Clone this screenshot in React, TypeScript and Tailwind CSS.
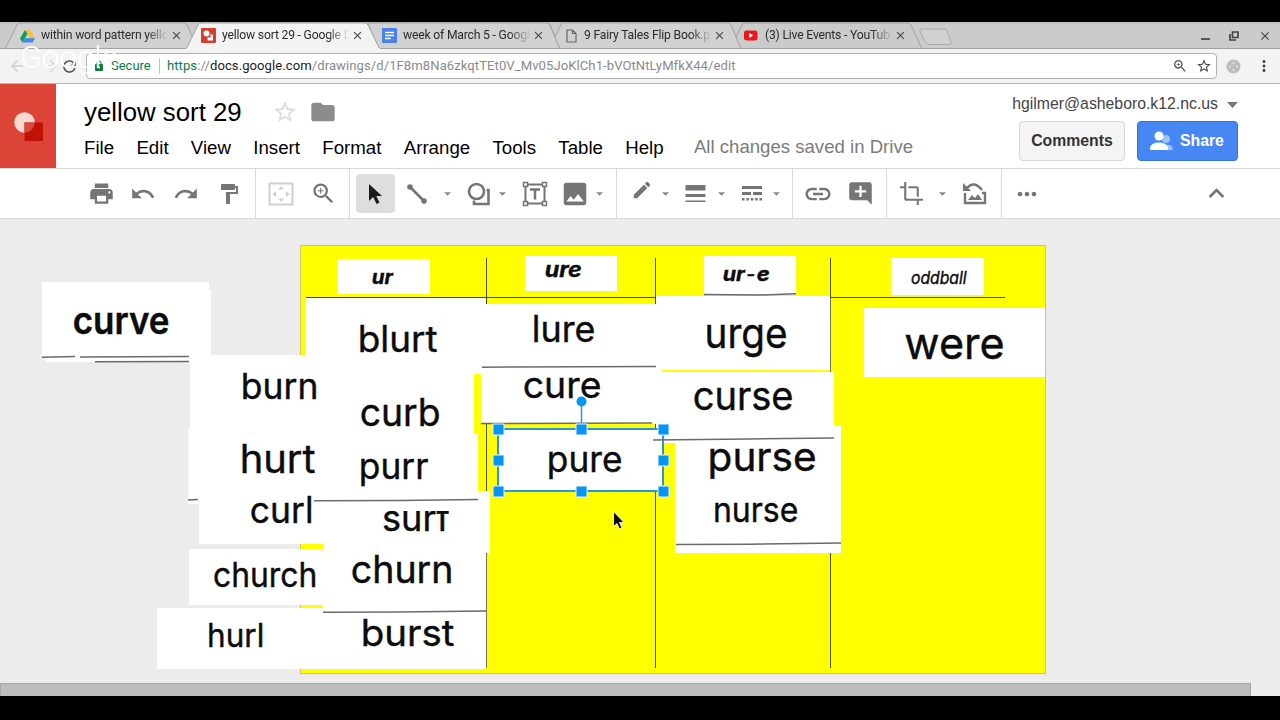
import type { ReactNode } from "react";
import {
  MdPrint,
  MdUndo,
  MdRedo,
  MdFormatPaint,
  MdZoomIn,
  MdEdit,
  MdLink,
  MdAddComment,
  MdCrop,
  MdMoreHoriz,
  MdKeyboardArrowUp,
  MdStarBorder,
  MdFolder,
  MdImage,
  MdRefresh,
  MdArrowBack,
  MdArrowForward,
  MdLock,
  MdMoreVert,
  MdClose,
} from "react-icons/md";

interface Word {
  text: string;
  x: number;
  y: number;
  w: number;
  size: number;
  weight?: number;
  italic?: boolean;
}

const menus = ["File", "Edit", "View", "Insert", "Format", "Arrange", "Tools", "Table", "Help"];

// x and w are the visible ends of the word, y is its baseline
const words: Word[] = [
  { text: "ur", x: 373, y: 283.5, w: 19, size: 20, weight: 700, italic: true },
  { text: "ure", x: 546, y: 276.5, w: 35, size: 21, weight: 700, italic: true },
  { text: "ur", x: 724, y: 281, w: 20, size: 20, weight: 700, italic: true },
  { text: "-", x: 747.5, y: 281, w: 7, size: 19, weight: 500, italic: true },
  { text: "e", x: 758, y: 281, w: 11, size: 20, weight: 700, italic: true },
  { text: "oddball", x: 912, y: 284, w: 54, size: 17.5, weight: 400, italic: true },
  { text: "curve", x: 75, y: 333.5, w: 93, size: 38, weight: 600 },
  { text: "blurt", x: 360, y: 352, w: 76, size: 37 },
  { text: "burn", x: 243, y: 398.5, w: 74, size: 36 },
  { text: "curb", x: 362, y: 425.5, w: 77, size: 38 },
  { text: "hurt", x: 242, y: 472.5, w: 72, size: 39 },
  { text: "purr", x: 361, y: 479, w: 66, size: 36 },
  { text: "curl", x: 252, y: 523, w: 60, size: 37 },
  { text: "church", x: 215, y: 587, w: 101, size: 34 },
  { text: "churn", x: 353, y: 583, w: 99, size: 38 },
  { text: "hurl", x: 209, y: 646.5, w: 54, size: 33 },
  { text: "burst", x: 363, y: 646, w: 90, size: 37 },
  { text: "lure", x: 534, y: 342, w: 60, size: 37 },
  { text: "cure", x: 525, y: 397.5, w: 75, size: 37 },
  { text: "pure", x: 549, y: 471.5, w: 72, size: 36 },
  { text: "urge", x: 707, y: 347.5, w: 79, size: 42 },
  { text: "curse", x: 695, y: 409.5, w: 97, size: 39 },
  { text: "purse", x: 710, y: 470.5, w: 105, size: 40 },
  { text: "nurse", x: 715, y: 522, w: 82, size: 35 },
  { text: "were", x: 907, y: 359, w: 96, size: 44 },
];

// x, y, width, height
const cards: number[][] = [
  [337, 259, 93, 35],
  [525, 256, 92, 35],
  [704, 256, 92, 39],
  [891, 258, 93, 37],
  [42, 282, 167, 75],
  [200, 290, 11, 70],
  [45, 356, 150, 6],
  [190, 355, 120, 80],
  [188.5, 430, 136, 74],
  [199, 500, 124, 44],
  [189, 549, 134, 56],
  [157, 608, 170, 61],
  [306, 298, 181, 76],
  [306, 370, 168, 66],
  [310, 434, 168, 60],
  [323, 491, 167, 62],
  [323, 552, 163, 60],
  [320, 608, 166, 61],
  [487, 304, 169, 64],
  [481, 366, 177, 58],
  [656, 296, 174, 74],
  [656, 369, 6, 8],
  [656, 372, 178, 71],
  [675, 426, 166, 127],
  [864, 308, 181, 69],
];

const penLines = [
  "M42 357.2L75 356.6M80 357L189 356.6M95 361.8L189 361.6",
  "M188 500L198 499.6M314 500.8L400 500.6L478 499.4",
  "M323 612.3L400 612L486 611",
  "M482 367.2L656 366.4",
  "M481 423.6L652 423",
  "M653 440L750 439L834 438",
  "M676 544.6L750 544.2L841 543",
  "M704 294.6L760 295L796 293.8",
];

const handles = [
  [498, 429], [581, 429], [663, 429],
  [498, 460], [663, 460],
  [498, 491], [581, 491], [663, 491],
];

const Caret = () => (
  <svg className="h-1 w-[7px] shrink-0" viewBox="0 0 8 4">
    <path d="M0 0h8L4 4z" fill="#8a8a8a" />
  </svg>
);

const Slot = ({ className, children }: { className: string; children: ReactNode }) => (
  <div className={`flex h-full shrink-0 items-center justify-center ${className}`}>{children}</div>
);

const Group = ({ className, children }: { className: string; children: ReactNode }) => (
  <div className={`flex h-full shrink-0 border-r border-[#d9d9d9] ${className}`}>{children}</div>
);

const Tab = ({ icon, title }: { icon: ReactNode; title: string }) => (
  <div className="relative flex w-[181px] shrink-0 items-center pl-5">
    <div className="flex w-[21px] shrink-0">{icon}</div>
    <span className="w-[126px] whitespace-nowrap text-[12.2px] tracking-[-0.2px] text-[#2b2b2b] [mask-image:linear-gradient(to_right,black_84%,transparent_101%)]">
      {title}
    </span>
    <MdClose className="ml-[3px] size-[13px] shrink-0 text-[#444]" />
  </div>
);

const TabStrip = () => (
  <div className="relative flex h-[27px] bg-[#cbcbcb] font-['Roboto',sans-serif]">
    <svg className="absolute inset-0" width="1280" height="27" viewBox="0 0 1280 27">
      <rect y="0" width="1280" height="1.5" fill="#bdbdbd" />
      <path d="M5 27L17 3Q18 1 20 1H184Q186 1 187 3L198 27z" fill="#d1d1d1" stroke="#a2a2a2" />
      <path d="M368 1H546Q549 1 550 3L560 27H378z" fill="#d1d1d1" stroke="#a2a2a2" />
      <path d="M549 1H727Q730 1 731 3L741 27H560L555 15L561 1z" fill="#d1d1d1" />
      <path d="M549 1L560 27M555 15L562 1H727Q730 1 731 3L741 27M736 15L743 1H907Q910 1 911 3L922 27" fill="none" stroke="#a2a2a2" />
      <path d="M922 7H944Q946 7 947 9L951 20Q952 22.500 949 22.500H929Q926 22.500 925 20L920 10Q919 7 922 7z" fill="#d1d1d1" stroke="#a9a9a9" />
      <path d="M0 26.5H1280" stroke="#a2a2a2" />
      <path d="M186 27.5L198 3Q199 1 202 1H364Q367 1 368 3L380 27.5z" fill="#f3f3f3" stroke="#a2a2a2" />
      <path d="M186 27H380" stroke="#f3f3f3" strokeWidth="1.5" />
    </svg>
    <Tab
      title="within word pattern yello"
      icon={
        <svg width="15" height="14" viewBox="0 0 15 14">
          <path d="M5 1h5l5 8h-5z" fill="#fbc02d" />
          <path d="M5 1L0 9.5 2.5 13.5 7.5 5z" fill="#109d58" />
          <path d="M5 9.2h10l-2.5 4.3H2.5z" fill="#4285f4" />
        </svg>
      }
    />
    <Tab
      title="yellow sort 29 - Google D"
      icon={
        <svg width="15" height="15" viewBox="0 0 15 15">
          <rect width="15" height="15" rx="1" fill="#d23f31" />
          <circle cx="5.5" cy="5.5" r="3" fill="#fff" />
          <path d="M9.5 6.5H12v6H6.5V9.5h3z" fill="#fff" />
        </svg>
      }
    />
    <Tab
      title="week of March 5 - Googl"
      icon={
        <svg width="15" height="15" viewBox="0 0 15 15">
          <rect width="15" height="15" rx="1" fill="#4a80e8" />
          <path d="M3 4.5h9M3 7.5h9M3 10.5h6" stroke="#fff" strokeWidth="1.4" />
        </svg>
      }
    />
    <Tab
      title="9 Fairy Tales Flip Book.p"
      icon={
        <svg className="ml-[3px]" width="11" height="14" viewBox="0 0 11 14">
          <path d="M1 1h5.5L10 4.5V13H1zM6.5 1v3.5H10" fill="none" stroke="#666" strokeWidth="1.2" />
        </svg>
      }
    />
    <Tab
      title="(3) Live Events - YouTube"
      icon={
        <svg width="14" height="15" viewBox="0 0 14 15">
          <rect y="2.5" width="13.5" height="10" rx="2.5" fill="#e8171f" />
          <path d="M5.2 5v5l4-2.5z" fill="#fff" />
        </svg>
      }
    />
    <div className="relative ml-auto flex items-center gap-[19px] pr-[8px]">
      <div className="mt-[7px] h-[2px] w-[9px] bg-[#555]" />
      <svg width="10" height="10" viewBox="0 0 10 10" fill="none" stroke="#444" strokeWidth="1.7">
        <path d="M3.5 1H9v5.5H3.5zM1 3v6h6" />
      </svg>
      <MdClose className="size-[14px] text-[#444]" />
    </div>
  </div>
);

const AddressBar = () => (
  <div className="flex h-[35px] items-center border-b border-[#b5b5b5] bg-[#f3f3f3] font-['Roboto',sans-serif]">
    <MdArrowBack className="ml-2 size-[18px] text-[#cfcfcf]" />
    <MdArrowForward className="ml-4 size-[18px] text-[#d6d6d6]" />
    <MdRefresh className="size-[19px] text-[#505050]" />
    <div className="ml-[7px] flex h-[26px] w-[1131px] items-center rounded-sm border border-[#b0b0b0] bg-white">
      <MdLock className="ml-[6px] size-3 text-[#0b8043]" />
      <span className="ml-[6px] w-[42px] text-[13px] text-[#0b8043]">Secure</span>
      <span className="ml-[6px] h-4 w-px bg-[#c4c4c4]" />
      <span className="ml-[7px] whitespace-nowrap text-[13.1px] tracking-[0.06px] text-[#8a8a8a]">
        <span className="text-[#0b8043]">https</span>://
        <span className="text-[#222]">docs.google.com</span>
        /drawings/d/1F8m8Na6zkqtTEt0V_Mv05JoKlCh1-bVOtNtLyMfkX44/edit
      </span>
      <MdZoomIn className="ml-auto size-4 text-[#555]" />
      <MdStarBorder className="ml-2 mr-[4px] size-4 text-[#444]" />
    </div>
    <svg className="ml-[9px]" width="15" height="15" viewBox="0 0 15 15">
      <circle cx="7.5" cy="7.5" r="7" fill="#bdbdbd" />
      <path d="M7.5 3v2M7.5 10v2M3 7.5h2M10 7.5h2" stroke="#e8e8e8" strokeWidth="1.5" />
    </svg>
    <MdMoreVert className="ml-[14px] size-[18px] text-[#444]" />
  </div>
);

const Header = () => (
  <header className="flex h-[85px] border-b border-[#d9d9d9] bg-white font-['Liberation_Sans',Arial,sans-serif]">
    <div className="w-14 shrink-0 bg-[#db4437]">
      <svg width="56" height="84" viewBox="0 84 56 84">
        <circle cx="24.5" cy="122.500" r="10.3" fill="#fbd9d0" />
        <rect x="24.5" y="122.500" width="18.5" height="18.5" fill="#c11104" />
        <path d="M24.5 122.5h10.3a10.3 10.3 0 0 1-10.3 10.3z" fill="#d64a3c" />
      </svg>
    </div>
    <div className="flex flex-col pl-7">
      <div className="mt-[12px] flex h-8 items-center">
        <h1 className="w-[188px] whitespace-nowrap text-[25.8px] text-black">yellow sort 29</h1>
        <MdStarBorder className="size-[26px] text-[#dcdcdc]" />
        <MdFolder className="ml-[11px] size-7 text-[#8c8c8c]" />
      </div>
      <nav className="mt-[7px] flex h-[27px] items-center gap-[22.25px] whitespace-nowrap text-[18.7px] text-black">
        {menus.map((menu) => (
          <span key={menu}>{menu}</span>
        ))}
        <span className="-mt-[4px] ml-2 text-[18.6px] text-[#7b7b7b]">All changes saved in Drive</span>
      </nav>
    </div>
    <div className="ml-auto mr-[42px] flex flex-col items-end">
      <div className="mt-[9px] flex h-[22px] items-center text-[15.8px] text-[#444]">
        hgilmer@asheboro.k12.nc.us
        <svg className="ml-[9px] mt-[2px]" width="11" height="6" viewBox="0 0 11 6">
          <path d="M0 0h11L5.500 6z" fill="#777" />
        </svg>
      </div>
      <div className="mt-[6px] flex gap-3 text-[15.8px] font-bold">
        <button className="h-10 w-[106px] rounded-sm border border-[#d6d6d6] bg-[#f4f4f4] text-[#333]">Comments</button>
        <button className="flex h-10 w-[101px] items-center rounded-sm border border-[#3573e0] bg-[#4687f4] pl-3 text-white">
          <svg className="mr-[6px]" width="24" height="20" viewBox="0 0 24 20">
            <circle cx="16" cy="8" r="4" fill="#9fc2fa" />
            <path d="M14 14q9-1 9 5h-6z" fill="#9fc2fa" />
            <circle cx="9" cy="5" r="4.500" fill="#fff" />
            <path d="M0 19v-2.500q2-5 9-5t9 5V19z" fill="#fff" />
          </svg>
          Share
        </button>
      </div>
    </div>
  </header>
);

const Toolbar = () => (
  <div className="flex h-[50px] items-center border-b border-[#d9d9d9] bg-white text-[#757575]">
    <Group className="w-64 pl-[81px]">
      <Slot className="w-[41px]"><MdPrint size={27} /></Slot>
      <Slot className="w-[42px]"><MdUndo size={26} /></Slot>
      <Slot className="w-[43px]"><MdRedo size={26} /></Slot>
      <Slot className="w-[43px]"><MdFormatPaint size={24} /></Slot>
    </Group>
    <Group className="w-[94px]">
      <Slot className="w-[50px]">
        <svg width="26" height="24" viewBox="0 0 26 24">
          <rect x="1.500" y="1.500" width="23" height="21" fill="none" stroke="#cfcfcf" strokeWidth="2" />
          <path d="M13 4l3 3.500h-6zM13 20l3-3.500h-6zM4.500 12L8 9v6zM21.500 12L18 9v6z" fill="#cfcfcf" />
        </svg>
      </Slot>
      <Slot className="w-[34px]"><MdZoomIn size={27} /></Slot>
    </Group>
    <Group className="w-[267px] pl-[6px]">
      <Slot className="w-[39px]">
        <div className="flex h-[39px] w-[39px] items-center justify-center rounded-sm bg-[#dedede]">
          <svg width="15" height="20" viewBox="0 0 15 20">
            <path d="M1 0v17l4.200-4 3.300 7 3-1.500-3.200-6.500H14z" fill="#1c1c1c" />
          </svg>
        </div>
      </Slot>
      <Slot className="w-[43px]">
        <svg width="20" height="20" viewBox="0 0 20 20" fill="#757575">
          <circle cx="3" cy="3" r="2.800" />
          <circle cx="17" cy="17" r="2.800" />
          <path d="M3 3l14 14" stroke="#757575" strokeWidth="2.600" />
        </svg>
      </Slot>
      <Slot className="w-[19px]"><Caret /></Slot>
      <Slot className="w-[43px]">
        <svg width="24" height="24" viewBox="0 0 24 24" fill="none" stroke="#757575" strokeWidth="2.600">
          <circle cx="9.500" cy="9.500" r="7.500" />
          <path d="M19.500 8h2v14H7v-3.500" />
        </svg>
      </Slot>
      <Slot className="w-[5px]"><Caret /></Slot>
      <Slot className="ml-[8px] w-[43px]">
        <svg width="26" height="26" viewBox="0 0 26 26" fill="none" stroke="#757575">
          <path d="M3.500 3.500h19v19h-19z" strokeWidth="2" />
          <path d="M8 8.500h10M13 8.500v10" strokeWidth="2.500" />
          <path d="M1.500 1.500h4v4h-4zM20.500 1.500h4v4h-4zM1.500 20.500h4v4h-4zM20.500 20.500h4v4h-4z" fill="#fff" strokeWidth="1.500" />
        </svg>
      </Slot>
      <Slot className="w-[38px]"><MdImage size={30} /></Slot>
      <Slot className="w-[11px]"><Caret /></Slot>
    </Group>
    <Group className="w-[176px] pl-[4px]">
      <Slot className="w-[41px] pb-2"><MdEdit size={22} /></Slot>
      <Slot className="w-[7px]"><Caret /></Slot>
      <Slot className="w-[52px]">
        <svg width="21" height="18" viewBox="0 0 20 18" fill="#757575">
          <path d="M0 0h20v5.500H0zM0 9h20v3H0zM0 15.500h20v1.500H0z" />
        </svg>
      </Slot>
      <Slot className="-ml-[2px] w-1"><Caret /></Slot>
      <Slot className="ml-[2px] w-[53px]">
        <svg width="20" height="15" viewBox="0 0 20 15" fill="#757575">
          <path d="M0 0h20v3H0zM0 6h9v3H0zM11 6h9v3h-9zM0 12h2.500v2.500H0zM4.400 12h2.500v2.500H4.400zM8.800 12h2.500v2.500H8.800zM13.200 12h2.500v2.500h-2.500zM17.500 12H20v2.500h-2.500z" />
        </svg>
      </Slot>
      <Slot className="-ml-[6px] w-[8px]"><Caret /></Slot>
    </Group>
    <Group className="w-[94px] pl-[3px]">
      <Slot className="w-[43px]"><MdLink size={30} /></Slot>
      <Slot className="w-[42px]"><MdAddComment size={27} /></Slot>
    </Group>
    <Group className="w-[115px] pl-[4px]">
      <Slot className="w-[41px]"><MdCrop size={25} /></Slot>
      <Slot className="w-[21px]"><Caret /></Slot>
      <Slot className="w-[43px]">
        <svg width="24" height="23" viewBox="0 0 24 23" fill="none" stroke="#757575" strokeWidth="2.400">
          <path d="M2 11v10h20V11h-3" />
          <path d="M4 6q7-8 15 2" />
          <path d="M0 1v8h8z" fill="#757575" stroke="none" />
          <path d="M5 18l4-5 3 3 3-4 4 6z" fill="#757575" stroke="none" />
        </svg>
      </Slot>
    </Group>
    <Slot className="w-[49px]"><MdMoreHoriz size={28} /></Slot>
    <MdKeyboardArrowUp className="ml-auto mr-[48px]" size={31} />
  </div>
);

const Drawing = () => (
  <svg className="block bg-[#ececec]" width="1280" height="464" viewBox="0 219 1280 464">
    <defs>
      <clipPath id="surfTop">
        <rect x="370" y="511" width="100" height="40" />
      </clipPath>
    </defs>
    <rect x="300.500" y="245.500" width="745" height="428" fill="#ffff00" stroke="#c9c95a" />
    <path d="M486.500 258V668M655.500 258V668M830.500 258V668M306 297.500H1005" stroke="#4c4c16" />
    {cards.map(([x, y, w, h]) => (
      <rect key={`${x}-${y}`} x={x} y={y} width={w} height={h} fill="#fff" />
    ))}
    <path d="M306 297.500H656M486.500 298V304M655.500 297V303" stroke="#44441c" />
    <path d="M486.500 553V668M830.500 297V372" stroke="#77775a" />
    <rect x="498" y="429" width="165" height="62" fill="#fff" stroke="#2a94dd" strokeWidth="2" />
    {penLines.map((d) => (
      <path key={d} d={d} stroke="#6a6a6a" strokeWidth="1.500" fill="none" />
    ))}
    <g fontFamily="Inter, sans-serif" fill="#0c0c0c" stroke="#0c0c0c" strokeWidth="0.4">
      {words.map((word) => (
        <text
          key={`${word.text}-${word.x}`}
          x={word.x - word.size * 0.06}
          y={word.y}
          fontSize={word.size}
          fontWeight={word.weight || 400}
          fontStyle={word.italic ? "italic" : "normal"}
          textLength={word.w + word.size * 0.1}
          lengthAdjust="spacingAndGlyphs"
        >
          {word.text}
        </text>
      ))}
      <text x="382" y="531" fontSize="36" textLength="68" lengthAdjust="spacingAndGlyphs" clipPath="url(#surfTop)">
        surf
      </text>
    </g>
    <path d="M581.500 401V429" stroke="#2a94dd" strokeWidth="1.500" />
    <circle cx="581.500" cy="401.500" r="5" fill="#0795f5" />
    {handles.map(([x, y]) => (
      <rect key={`${x}-${y}`} x={x - 5} y={y - 5} width="11" height="11" fill="#0795f5" stroke="#e8f6ff" />
    ))}
    <path d="M613.500 511.500v15l3.500-3 2.500 5.500 2.500-1-2.500-5.500h4.500z" fill="#0c0c14" stroke="#fff" strokeWidth="0.800" />
  </svg>
);

const App = () => {
  return (
    <div className="relative flex h-[720px] w-[1280px] flex-col overflow-hidden bg-black pt-[22px]">
      <TabStrip />
      <AddressBar />
      <Header />
      <Toolbar />
      <Drawing />
      <div className="h-[13px] bg-[#ececec]">
        <div className="h-full w-[1251px] border border-b-0 border-[#a8a8a8] bg-[#bdbdbd]" />
      </div>
      <span className="absolute left-[20px] top-[38px] font-['Roboto',sans-serif] text-[32px] font-light leading-[38px] tracking-[-0.3px] text-white">
        Google
      </span>
    </div>
  );
};

export default App;
